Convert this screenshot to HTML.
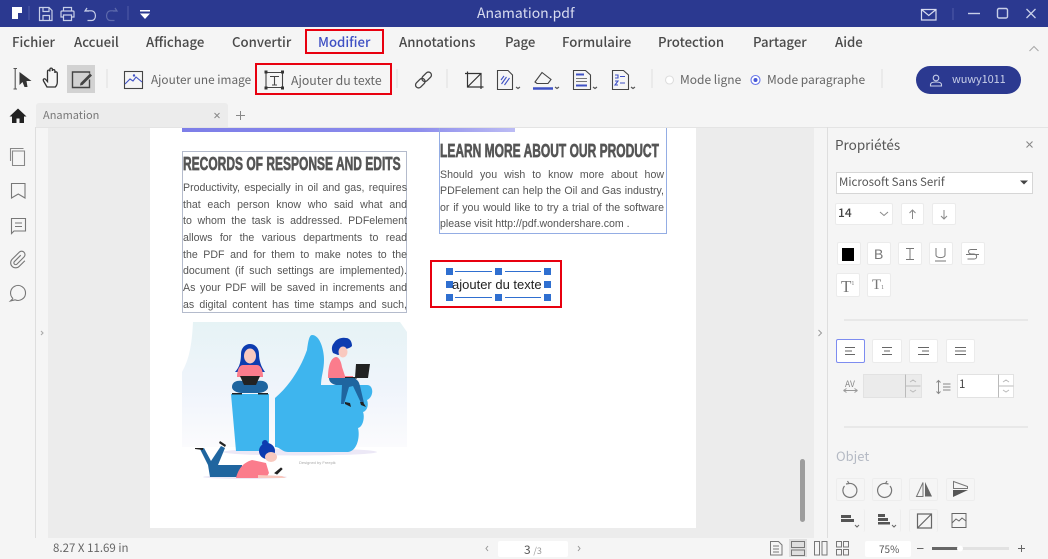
<!DOCTYPE html>
<html><head><meta charset="utf-8">
<style>
html,body{margin:0;padding:0;width:1048px;height:559px;overflow:hidden;background:#f5f5f5}
body{position:relative;font-family:"Noto Sans CJK SC","Liberation Sans",sans-serif;color:#555}
.t{position:absolute;white-space:nowrap;line-height:1}
.a{position:absolute}
.m{font-size:13.2px;font-weight:500;color:#4a4a4a;top:35px}
.b{font-size:12px;color:#666;top:74px}
.p{font-family:"Liberation Sans",sans-serif;font-size:10.6px;color:#555;position:absolute;white-space:nowrap;line-height:1}
.j{text-align:justify;text-align-last:justify;white-space:normal}
.h{font-family:"Liberation Sans",sans-serif;font-weight:bold;color:#555;position:absolute;white-space:nowrap;line-height:1;font-size:17px;transform-origin:0 0;-webkit-text-stroke:.6px #555}
.bt{position:absolute;box-sizing:border-box;background:#fff;border:1px solid #ebebeb;border-radius:2px}
.ob{position:absolute;box-sizing:border-box;width:29px;height:23px;border:1px solid #ededed;border-radius:2px}
svg{position:absolute;overflow:visible}
.hd{position:absolute;width:7px;height:7px;background:#2f6fd0}
</style></head><body>
<!-- title bar -->
<div class="a" style="left:0;top:0;width:1048px;height:27px;background:#2b3990"></div>
<svg style="left:0;top:0" width="1048" height="27" fill="none" stroke="#c8cfe8" stroke-width="1.200">
<path d="M12 7h10v6h-4v6h-6z" fill="#fff" stroke="none"/>
<path d="M29 6v14M128 6v14M953 8v12" stroke="#4a57a5"/>
<path d="M39.500 7.500h9.500l3 3v10h-12.500zM43 7.500v4h6v-4M43 20.500v-5h6.500v5"/>
<path d="M63.500 11V7.500h8V11M63.500 17h-2.500v-5c0-.6.500-1 1-1h11c.6 0 1 .4 1 1v5h-2.500M63.500 15h8v5.500h-8z"/>
<path d="M87 8l-2 3h4M85.500 10.800h6c5 0 5.500 9.700 0 9.700h-4"/>
<path d="M115 8l2 3h-4M116.500 10.800h-6c-5 0-5.500 9.700 0 9.700h4" stroke="#5e6aac"/>
<path d="M140 10h10v1.500h-10zM140 13.500h10l-5 5.500z" fill="#fff" stroke="none"/>
<path d="M921.500 9.500h14.500v10.500h-14.500zM921.500 9.500l7.250 6 7.250-6" stroke="#d7dbef"/>
<path d="M968 13.500h12" stroke-width="1.400"/>
<rect x="997.500" y="8.500" width="10" height="9.500" rx="1.500" stroke-width="1.400"/>
<path d="M1026.500 9l9 9M1035.500 9l-9 9" stroke-width="1.300"/>
</svg>
<div class="t" style="left:477px;top:6px;font-size:14px;color:#d8dcf0">Anamation.pdf</div>
<!-- menu -->
<div class="t m" style="left:12px">Fichier</div>
<div class="t m" style="left:74px">Accueil</div>
<div class="t m" style="left:146px">Affichage</div>
<div class="t m" style="left:232px">Convertir</div>
<div class="t m" style="left:318px;color:#3f51c4">Modifier</div>
<div class="t m" style="left:399px">Annotations</div>
<div class="t m" style="left:505px">Page</div>
<div class="t m" style="left:562px">Formulaire</div>
<div class="t m" style="left:658px">Protection</div>
<div class="t m" style="left:753px">Partager</div>
<div class="t m" style="left:835px">Aide</div>
<div class="a" style="left:305px;top:29px;width:75px;height:21px;border:2px solid #e8000f"></div>
<svg style="left:0;top:0" width="1048" height="130" fill="none" stroke="#666" stroke-width="1.100">
<path d="M1029.500 51l4.500-4.500 4.500 4.500" stroke="#aaa"/>
<rect x="67" y="65" width="28" height="28" fill="#d2d2d2" stroke="none"/>
<path d="M13.500 68.500h3.500M13.500 89h3.500M15.200 68.500v20.500" stroke="#555"/>
<path d="M19.500 72l12 9h-5l1 6-3 0-2-5-3 3z" fill="#333" stroke="none"/>
<path d="M47 87l-3.500-6c-.8-2 1-3 2.200-1.500l1.800 2V71.500c0-1.800 2.400-1.800 2.400 0v-2c0-1.800 2.500-1.800 2.500 0v1.500c0-1.800 2.500-1.800 2.500 0v2c0-1.600 2.400-1.600 2.400 .3V82c0 2-1 4-2 5z" stroke="#333" stroke-width="1.300"/>
<path d="M89.500 73.500v-1.500h-17v15.500h17v-8" stroke="#444" stroke-width="1.400"/>
<path d="M80.500 83l9.500-9.500 2 2-9.500 9.500-2.500 .5z" fill="#444" stroke="none"/>
<path d="M107 69v19M397 69v19M447 69v19M652 69v19M882 69v19" stroke="#e2e2e2"/>
<rect x="124.500" y="71.500" width="18" height="17" stroke="#444"/>
<path d="M125 84l5-5 3 2 3-4 6 5" stroke="#3f51c4"/><circle cx="134" cy="75.500" r="1.200" fill="#3f51c4" stroke="none"/>
<path d="M266 72v16M282.500 72v16M266 72.500h17M266 87.500h17" stroke="#444"/>
<path d="M270 76.500h9M274.500 76.500v8.500M272 85h5" stroke="#444"/>
<path d="M264.500 70.500h3v3h-3zM281 70.500h3v3h-3zM264.500 86.500h3v3h-3zM281 86.500h3v3h-3z" fill="#333" stroke="none"/>
<g transform="rotate(-45 423.500 80)" stroke="#444" stroke-width="1.300"><rect x="413.500" y="77" width="11" height="6" rx="3"/><rect x="422.500" y="77" width="11" height="6" rx="3"/></g>
<path d="M467.500 73.500h13.500v13.500h-13.500zM467.500 87l13.500-13.500M465 73.500h4M479.500 87h4M467.500 71.500v4M481 85.500v3.500" stroke="#333" stroke-width="1.200"/>
<path d="M497.500 70.500h10.500l4.500 4.500v14.500h-15z" stroke="#444"/><path d="M501.500 84l5-7M504.500 85l5-7M501 80l3-4" stroke="#3f51c4"/>
<path d="M535 82l7-9.500 9 7-3 4h-11z" stroke="#444"/><path d="M533 88.500h20" stroke="#3f51c4" stroke-width="2.500"/>
<path d="M573.500 70.500h12l5 4.500v14.500h-17z" stroke="#444"/><path d="M576 74.500h8M576 85.500h11" stroke="#3f51c4" stroke-width="2"/><path d="M576 78.500h11M576 81.500h11" stroke="#777"/>
<path d="M612.500 70.500h11l5 4.500v14.500h-16z" stroke="#444"/><path d="M615 75h3v3h-3M615 81h3l-3 4h3M620 76.500h5M620 83h5" stroke="#3f51c4"/>
<path d="M516 87l2 1.500 2-1.500M555 87l2 1.500 2-1.500M593 87l2 1.500 2-1.500M631 87l2 1.500 2-1.500" stroke="#555"/>
<circle cx="669.500" cy="80" r="4" fill="#fff" stroke="#ddd"/>
<circle cx="755.500" cy="80" r="4.500" fill="#fff" stroke="#6a78e8"/><circle cx="755.500" cy="80" r="2" fill="#4658d8" stroke="none"/>
</svg>
<div class="a" style="left:255px;top:63px;width:133px;height:28px;border:2px solid #e8000f"></div>
<div class="t b" style="left:151px;font-size:11.800px">Ajouter une image</div>
<div class="t b" style="left:291px;font-size:12.300px">Ajouter du texte</div>
<div class="t b" style="left:680px">Mode ligne</div>
<div class="t b" style="left:767px">Mode paragraphe</div>
<div class="a" style="left:916px;top:66px;width:105px;height:28px;border-radius:14px;background:#2b3990"></div>
<svg style="left:930px;top:74px" width="14" height="14" fill="none" stroke="#c8cfe8" stroke-width="1.100"><circle cx="6" cy="4" r="2.800"/><path d="M.5 12v-1.500c0-1.500 2-2.500 5.500-2.500s5.500 1 5.500 2.500V12z"/></svg>
<div class="t" style="left:952px;top:74px;font-size:11px;color:#c8cfe8;letter-spacing:-.1px">wuwy1011</div>
<!-- tabs -->
<div class="a" style="left:36px;top:103px;width:192px;height:24px;background:#ececec;border-radius:3px 3px 0 0"></div>
<svg style="left:0;top:0" width="260" height="127"><path d="M9.500 116.500l8.500-8 8.500 8h-2.500v6.500h-4.500v-4.500h-3v4.500h-4.500v-6.500z" fill="#222"/>
<path d="M214.500 113l5 5M219.500 113l-5 5M236 115.500h9M240.500 111v9" stroke="#888" stroke-width="1"/></svg>
<div class="t" style="left:43px;top:110px;font-size:11px;color:#777">Anamation</div>
<!-- work area -->
<div class="a" style="left:35px;top:127px;width:1px;height:411px;background:#dedede"></div>
<div class="a" style="left:48px;top:127px;width:766px;height:411px;background:#ececec"></div>
<div class="a" style="left:36px;top:127px;width:1012px;height:1px;background:#e4e4e4"></div>
<div class="a" style="left:150px;top:128px;width:546px;height:400px;background:#fff"></div>
<div class="a" style="left:800px;top:459px;width:5px;height:63px;background:#9d9d9d;border-radius:3px"></div>
<div class="a" style="left:827px;top:127px;width:1px;height:411px;background:#dedede"></div>
<svg style="left:0;top:0" width="60" height="345" fill="none" stroke="#777" stroke-width="1.100">
<path d="M12.500 151h12v14.500h-12zM10.500 161V148.500h13" stroke="#888"/>
<path d="M11.500 183.500h13.500v14.500l-6.750-4-6.750 4z"/>
<path d="M11.500 218.500h14v12.500H14l-2.500 2.500zM15 223h7M15 226.500h7"/>
<g transform="translate(18.500 260) rotate(45)"><path d="M-1.800-5v9a1.800 1.800 0 0 0 3.600 0v-10a3.400 3.400 0 0 0-6.800 0v10a5 5 0 0 0 10 0v-8"/></g>
<path d="M13 298.500a7.500 7.500 0 1 1 2 1.300M13 298.500l-2.500 2.500 4.500-1.200"/>
<path d="M41 331l2 2-2 2" stroke="#aaa"/>
</svg>
<svg style="left:818px;top:330px" width="8" height="8" fill="none" stroke="#999"><path d="M.5 0l3 3-3 3"/></svg>
<!-- page content -->
<div class="a" style="left:182px;top:128px;width:333px;height:4px;background:linear-gradient(90deg,#7d7ee8,#8c8cec 70%,#bcbcf4)"></div>
<div class="a" style="left:182px;top:151px;width:225px;height:162px;border:1px solid #b4bbcc;box-sizing:border-box"></div>
<div class="h" style="left:183px;top:155px;transform:scale(.706,1.06)">RECORDS OF RESPONSE AND EDITS</div>
<div class="p j" style="left:183px;top:183px;width:224px">Productivity, especially in oil and gas, requires</div>
<div class="p j" style="left:183px;top:199.500px;width:224px">that each person know who said what and</div>
<div class="p j" style="left:183px;top:216px;width:224px">to whom the task is addressed. PDFelement</div>
<div class="p j" style="left:183px;top:233px;width:224px">allows for the various departments to read</div>
<div class="p j" style="left:183px;top:249.500px;width:224px">the PDF and for them to make notes to the</div>
<div class="p j" style="left:183px;top:266px;width:224px">document (if such settings are implemented).</div>
<div class="p j" style="left:183px;top:283px;width:224px">As your PDF will be saved in increments and</div>
<div class="p j" style="left:183px;top:299.500px;width:224px">as digital content has time stamps and such,</div>
<div class="a" style="left:439px;top:128px;width:228px;height:106px;border:1px solid #94ade4;border-top:0;box-sizing:border-box"></div>
<div class="h" style="left:440px;top:142px;transform:scale(.706,1.06)">LEARN MORE ABOUT OUR PRODUCT</div>
<div class="p j" style="left:440px;top:170px;width:224px">Should you wish to know more about how</div>
<div class="p j" style="left:440px;top:186px;width:224px">PDFelement can help the Oil and Gas industry,</div>
<div class="p j" style="left:440px;top:203px;width:224px">or if you would like to try a trial of the software</div>
<div class="p" style="left:440px;top:219px">please visit http://pdf.wondershare.com .</div>
<!-- added text -->
<div class="a" style="left:430px;top:260px;width:128px;height:44px;border:2px solid #e8000f"></div>
<svg style="left:440px;top:262px" width="110" height="40" fill="none" stroke="#2f6fd0"><path d="M15 9.500h37M65 9.500h36M15 35.500h37M65 35.500h36"/></svg>
<div class="hd" style="left:446px;top:268px"></div><div class="hd" style="left:495px;top:268px"></div><div class="hd" style="left:544px;top:268px"></div>
<div class="hd" style="left:446px;top:281px"></div><div class="hd" style="left:544px;top:281px"></div>
<div class="hd" style="left:446px;top:294px"></div><div class="hd" style="left:495px;top:294px"></div><div class="hd" style="left:544px;top:294px"></div>
<div class="t" style="left:452px;top:278px;font-family:'Liberation Sans',sans-serif;font-size:13px;color:#222">ajouter du texte</div>
<!-- illustration -->
<svg style="left:170px;top:315px" width="250" height="175">
<defs><linearGradient id="g" x1="0" y1="0" x2="0" y2="1"><stop offset="0" stop-color="#e6f3f5"/><stop offset=".5" stop-color="#eff4fb"/><stop offset="1" stop-color="#fbfbfd"/></linearGradient></defs>
<path d="M23 7h207l7 10v115H12V57c8-14 10-30 11-50z" fill="url(#g)"/>
<ellipse cx="130" cy="137" rx="77" ry="3.500" fill="#ece8f6"/><ellipse cx="75" cy="162" rx="42" ry="2" fill="#ece8f6"/>
<path d="M61 79h38v57H66z" fill="#3eb5ee"/>
<path d="M105 83C118 72 130 55 137 35 138 28 139 20 142 20 150 20 154 35 154 45 154 55 151 62 151 70L197 70C204 70 204 82 197 85 199 90 197 96 193 97 195 102 193 112 188 113 190 120 188 136 178 137L118 137C112 137 110 132 105 132Z" fill="#3eb5ee"/>
<!-- woman sitting -->
<path d="M65 57c5-5 6-12 6-18 0-6 4-10 9-10s9 4 9 10c0 6 2 13 6 18z" fill="#0d3cb0"/>
<ellipse cx="80" cy="41" rx="6" ry="7.500" fill="#f9c9bf"/>
<path d="M67 62c0-6 2-12 6-12h14c4 0 6 6 6 12z" fill="#fb7c8c"/>
<path d="M62 72c0-5 5-7 10-6l8 3 8-3c5-1 10 1 10 6 0 4-6 6-10 6H72c-4 0-10-2-10-6z" fill="#1f659f"/>
<path d="M70 61h20l-4 9H74z" fill="#222"/>
<path d="M62 78h10v1.500H62zM88 78h10v1.500H88z" fill="#222"/>
<!-- man -->
<path d="M163 38c-2-4-1-8 1-10 2-4 8-6 12-5 4 0 6 4 6 8-2 2-5 3-8 3l-2 5-4 1z" fill="#0d3cb0"/>
<ellipse cx="173" cy="37" rx="4.500" ry="5.500" fill="#f9c9bf"/>
<path d="M158 63c0-10 2-20 8-21 3 0 5 4 6 10l3 9h8v2z" fill="#fb7c8c"/>
<path d="M186 49h14l-2 14h-13z" fill="#222"/><path d="M175 62h12v1.500h-12z" fill="#222"/>
<path d="M159 63h25c4 2 5 4 6 8l4 17h-3l-8-17-4 1-5 17h-3l1-19h-6c-4-1-7-3-7-7z" fill="#1f659f"/>
<path d="M175 87l5 1 1 4-6-3zM190 87l3 0 3 5-5-2z" fill="#222"/>
<!-- woman lying -->
<path d="M38 150L30 134 34 133 41 146 51 131 55 133 48 150 72 150 72 162 40 162z" fill="#1f659f"/>
<path d="M25 133l8 0v2l-8-1zM50 126l6 4-1 2-6-4z" fill="#222"/>
<path d="M66 163c2-8 6-15 16-18l14 3 3 10-3 5z" fill="#fb7c8c"/>
<path d="M88 160l24 1 4 2H88z" fill="#f9c9bf"/>
<circle cx="97" cy="136" r="8" fill="#0d3cb0"/><circle cx="95" cy="128" r="3" fill="#0d3cb0"/><ellipse cx="101" cy="142" rx="6" ry="5" fill="#f9c9bf"/>
<path d="M105 158l6-5 1 1-5 5z" fill="#222" stroke="#222"/>
</svg>
<div class="t" style="left:299px;top:461px;font-size:4px;color:#aaa;font-family:'Liberation Sans',sans-serif">Designed by Freepik</div>
<!-- right panel -->
<div class="t" style="left:835px;top:138px;font-size:13.500px;color:#555">Propriétés</div>
<div class="a" style="left:836px;top:172px;width:197px;height:22px;background:#fff;border:1px solid #d6d6d6;box-sizing:border-box"></div>
<div class="t" style="left:839px;top:177px;font-size:11.500px;color:#555">Microsoft Sans Serif</div>
<div class="bt" style="left:835px;top:203px;width:58px;height:22px"></div>
<div class="t" style="left:838px;top:207px;font-size:12px;font-weight:500;color:#444">14</div>
<div class="bt" style="left:901px;top:203px;width:23px;height:22px"></div><div class="bt" style="left:932px;top:203px;width:24px;height:22px"></div>
<div class="bt" style="left:837px;top:242px;width:24px;height:23px"></div><div class="bt" style="left:867px;top:242px;width:24px;height:23px"></div><div class="bt" style="left:898px;top:242px;width:24px;height:23px"></div><div class="bt" style="left:929px;top:242px;width:24px;height:23px"></div><div class="bt" style="left:961px;top:242px;width:24px;height:23px"></div>
<div class="bt" style="left:836px;top:273px;width:24px;height:24px"></div><div class="bt" style="left:867px;top:273px;width:24px;height:24px"></div>
<div class="a" style="left:842px;top:248px;width:12px;height:13px;background:#000"></div>
<div class="t" style="left:874px;top:247px;font-size:14px;color:#777;font-family:'Liberation Sans',sans-serif">B</div>
<div class="t" style="left:841px;top:278px;font-size:17px;color:#777;font-family:'Liberation Serif',serif">T<span style="font-size:6px;vertical-align:7px">1</span></div>
<div class="t" style="left:872px;top:278px;font-size:15px;color:#777;font-family:'Liberation Serif',serif">T<span style="font-size:6px">1</span></div>
<!-- align buttons -->
<div class="bt" style="left:836px;top:339px;width:29px;height:24px;border-color:#7d8cf0"></div><div class="bt" style="left:872px;top:339px;width:30px;height:24px"></div><div class="bt" style="left:909px;top:339px;width:29px;height:24px"></div><div class="bt" style="left:946px;top:339px;width:29px;height:24px"></div>
<!-- fields -->
<div class="a" style="left:863px;top:374px;width:59px;height:24px;background:#ebebeb;border:1px solid #e2e2e2;box-sizing:border-box"></div>
<div class="t" style="left:845px;top:380px;font-size:8.500px;color:#888">AV</div>
<div class="a" style="left:957px;top:374px;width:57px;height:24px;background:#fff;border:1px solid #e2e2e2;box-sizing:border-box"></div>
<div class="t" style="left:959px;top:379px;font-size:11.500px;color:#444">1</div>
<div class="t" style="left:836px;top:449px;font-size:13px;color:#b5bac4">Objet</div>
<div class="ob" style="left:836px;top:478px"></div><div class="ob" style="left:872px;top:478px;width:30px"></div><div class="ob" style="left:909px;top:478px"></div><div class="ob" style="left:946px;top:478px"></div>
<div class="ob" style="left:836px;top:509px;border-bottom:0;border-top:0;border-left:0"></div><div class="ob" style="left:872px;top:509px;border-top:0;border-left:0;border-bottom:0"></div><div class="ob" style="left:909px;top:509px;border-bottom:0"></div>
<!-- status -->
<div class="a" style="left:0;top:538px;width:1048px;height:21px;background:#f5f5f5"></div>
<div class="a" style="left:498px;top:541px;width:70px;height:16px;background:#fff;border-radius:2px"></div>
<div class="a" style="left:865px;top:541px;width:46px;height:16px;background:#fff;border-radius:2px"></div>
<!-- right-panel and status icons -->
<svg style="left:0;top:0" width="1048" height="559" fill="none" stroke="#777" stroke-width="1">
<path d="M1026.500 141.500l6 6M1032.500 141.500l-6 6" stroke="#888" stroke-width="1.100"/>
<path d="M1020 180.500h8l-4 4z" fill="#444" stroke="none"/>
<path d="M880 212l4 3.500 4-3.500M912.500 219v-9M909.500 213l3-3 3 3M944 210v9M941 216l3 3 3-3" stroke="#888"/>
<path d="M906 248.500h8M906 259.500h8M910 248.500v11"/>
<path d="M936 248v7c0 3.500 9 3.500 9 0v-7M935 261h11"/>
<path d="M977 249.500h-6c-3.500 0-3 4 0 4.500h3c3.500 .5 3.500 5 0 5h-6.500M966 254.500h13"/>
<path d="M844 320h184M844 427h184" stroke="#dcdcdc" stroke-width="1.100"/>
<path d="M845 347.500h10M845 351h7M845 354.500h10M882 347.500h10M884 351h6M882 354.500h10M918 347.500h11M922 351h7M918 354.500h11M955 347.500h11M955 351h11M955 354.500h11" stroke="#666"/>
<path d="M843.500 390.500h14M843.500 390.500l3-2M843.500 390.500l3 2M857.500 390.500l-3-2M857.500 390.500l-3 2" stroke="#999"/>
<path d="M938.500 380.500v13M936.500 382.500l2-2 2 2M936.500 391.500l2 2 2-2M943 384h7.500M943 387h7.500M943 390h7.500" stroke="#888"/>
<path d="M905.500 374.500" stroke="none"/>
<path d="M905.500 374.500v23M905.500 386h15M910 382l3-2 3 2M910 390l3 2 3-2M998.500 374.500v23M998.500 386h15M1003 382l3-2 3 2M1003 390l3 2 3-2" stroke="#bbb"/>
<path d="M849 483.500a7 7 0 1 1-4.500 2.500M849 483.500l-1.500-2.500M849 483.500l-3 .5" stroke-width="1.200"/>
<path d="M885.500 483.500a7 7 0 1 0 4.500 2.500M885.500 483.500l1.500-2.500M885.500 483.500l3 .5" stroke-width="1.200"/>
<path d="M923 482.500v14h-6.500z"/><path d="M925 482l7 14.500h-7z" fill="#666" stroke="none"/>
<path d="M953.500 481.500l14 5v2h-14z"/><path d="M953 490h15l-15 7z" fill="#555" stroke="none"/>
<path d="M841 515h10v3h-10zM841 519h13v3h-13z" fill="#555" stroke="none"/><path d="M855 525l2 2 2-2M892 525l2 2 2-2" stroke="#666"/>
<path d="M878 514h7v3h-7zM878 518h10v3h-10zM878 522h12v2.500h-12z" fill="#555" stroke="none"/>
<path d="M917.500 514h14v14h-14zM917.500 528l14-14" stroke="#666" stroke-width="1.200"/>
<rect x="952" y="513.500" width="14" height="14" stroke="#666"/><path d="M952 523l4-4 3 2 3-3 4 3" stroke="#666"/>
<path d="M770.500 541.500h8l3.500 3.500v10h-11.500zM773 546h6M773 549h6M773 552h6"/>
<rect x="789" y="539" width="18" height="18" fill="#dfdfdf" stroke="none"/>
<path d="M791.500 541.500h13v6h-13zM791.500 550h13v5.500h-13zM814.500 541.500h5v13.500h-5zM822 541.500h5v13.500h-5zM836.500 541.500h5v5.500h-5zM843.500 541.500h5v5.500h-5zM836.500 549.500h5v5.500h-5zM843.500 549.500h5v5.500h-5z"/>
<path d="M488 546l-2 2.500 2 2.500M578 546l2 2.500-2 2.500" stroke="#999"/>
<path d="M932 548.500h77" stroke="#e2e2e2" stroke-width="3"/><path d="M932 548.500h26" stroke="#666" stroke-width="3"/>
<circle cx="960" cy="548.500" r="3" fill="#fff" stroke="none"/>
<path d="M917 548.500h6.500M1018 548.500h7M1021.500 545v7" stroke="#666"/>
</svg>
<div class="t" style="left:53px;top:543px;font-size:11.500px;color:#666">8.27 X 11.69 in</div>
<div class="t" style="left:524px;top:544px;font-size:12px;color:#555">3 <span style="font-size:9px;color:#999">/3</span></div>
<div class="t" style="left:879px;top:544px;font-size:10px;color:#555">75%</div>
</body></html>
